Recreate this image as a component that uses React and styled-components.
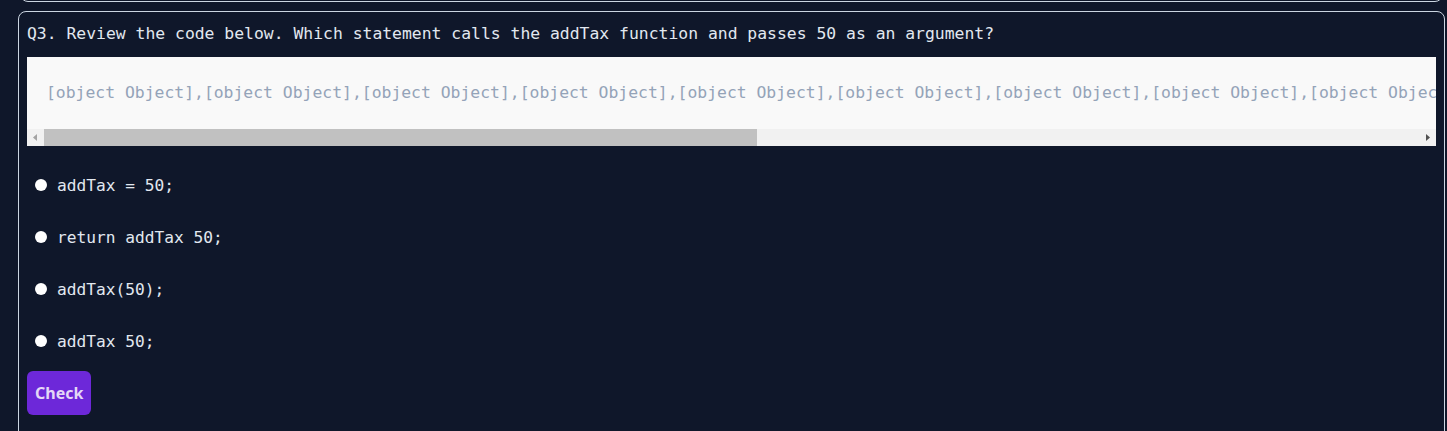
import React from "react";
import styled, { createGlobalStyle } from "styled-components";

const GlobalStyle = createGlobalStyle`
  html, body {
    margin: 0;
    padding: 0;
    background: #0f172a;
    overflow: hidden;
  }
  body {
    font-family: "DejaVu Sans Mono", monospace;
  }
`;

const Page = styled.div`
  display: flex;
  flex-direction: column;
  gap: 9px;
  padding: 0 2px 0 18px;
  min-height: 431px;
  box-sizing: border-box;
`;

const Card = styled.section`
  border: 1px solid #cbd5e1;
  border-radius: 8px;
  padding: ${(p) => (p.$stub ? "0" : "8px 8px 40px 8px")};
  height: ${(p) => (p.$stub ? "20px" : "auto")};
  margin: ${(p) => (p.$stub ? "-18px 2px 0 2px" : "0")};
  box-sizing: border-box;
`;

const Title = styled.div`
  color: #e2e8f0;
  font-family: "DejaVu Sans Mono", monospace;
  font-size: 16.4px;
  line-height: 28px;
`;

const CodeFrame = styled.div`
  margin-top: 9px;
  background: #f9f9f9;
  display: flex;
  flex-direction: column;
  overflow: hidden;
`;

const CodeBlock = styled.pre`
  margin: 0;
  color: #94a3b8;
  font-family: "DejaVu Sans Mono", monospace;
  font-size: 16.4px;
  line-height: 24px;
  padding: 24px 19px;
  white-space: pre;
  overflow: hidden;
`;

const ScrollBar = styled.div`
  display: flex;
  height: 17px;
  background: #f1f1f1;
`;

const ScrollButton = styled.div`
  width: 17px;
  height: 17px;
  flex: none;
  display: flex;
  align-items: center;
  justify-content: center;
`;

const Track = styled.div`
  flex: 1;
  display: flex;
`;

const Thumb = styled.div`
  width: ${(p) => p.$size};
  background: #c1c1c1;
`;

const Options = styled.div`
  display: flex;
  flex-direction: column;
  margin-top: 13px;
`;

const Option = styled.label`
  display: flex;
  align-items: center;
  height: 52px;
  color: #e2e8f0;
  font-family: "DejaVu Sans Mono", monospace;
  font-size: 16.2px;
  cursor: pointer;
`;

const Radio = styled.input.attrs({ type: "radio" })`
  appearance: none;
  width: 12px;
  height: 12px;
  margin: 0 10px 0 8px;
  border-radius: 50%;
  background: #ffffff;
  border: none;
  flex: none;
`;

const CheckButton = styled.button`
  margin-top: 4px;
  align-self: flex-start;
  height: 44px;
  padding: 0 8px;
  border: none;
  border-radius: 6px;
  background: #6d28d9;
  color: #e4d8f6;
  font-family: "Noto Sans", "Open Sans", sans-serif;
  font-weight: 700;
  font-size: 16px;
  cursor: pointer;
`;

const Body = styled.div`
  display: flex;
  flex-direction: column;
`;

const Arrow = ({ dir, color }) => (
  <svg width="17" height="17" viewBox="0 0 17 17">
    {dir === "left" ? (
      <polygon points="10,5 6,8.5 10,12" fill={color} />
    ) : (
      <polygon points="7,5 11,8.5 7,12" fill={color} />
    )}
  </svg>
);

const code = Array.from({ length: 17 }, () => "[object Object]").join(",");

const options = ["addTax = 50;", "return addTax 50;", "addTax(50);", "addTax 50;"];

export default function App() {
  return (
    <>
      <GlobalStyle />
      <Page>
        <Card $stub />
        <Card>
          <Body>
            <Title>
              Q3. Review the code below. Which statement calls the addTax function and passes 50 as an argument?
            </Title>
            <CodeFrame>
              <CodeBlock>{code}</CodeBlock>
              <ScrollBar>
                <ScrollButton>
                  <Arrow dir="left" color="#a3a3a3" />
                </ScrollButton>
                <Track>
                  <Thumb $size="51.85%" />
                </Track>
                <ScrollButton>
                  <Arrow dir="right" color="#505050" />
                </ScrollButton>
              </ScrollBar>
            </CodeFrame>
            <Options>
              {options.map((o) => (
                <Option key={o}>
                  <Radio name="q3" />
                  {o}
                </Option>
              ))}
            </Options>
            <CheckButton>Check</CheckButton>
          </Body>
        </Card>
      </Page>
    </>
  );
}
